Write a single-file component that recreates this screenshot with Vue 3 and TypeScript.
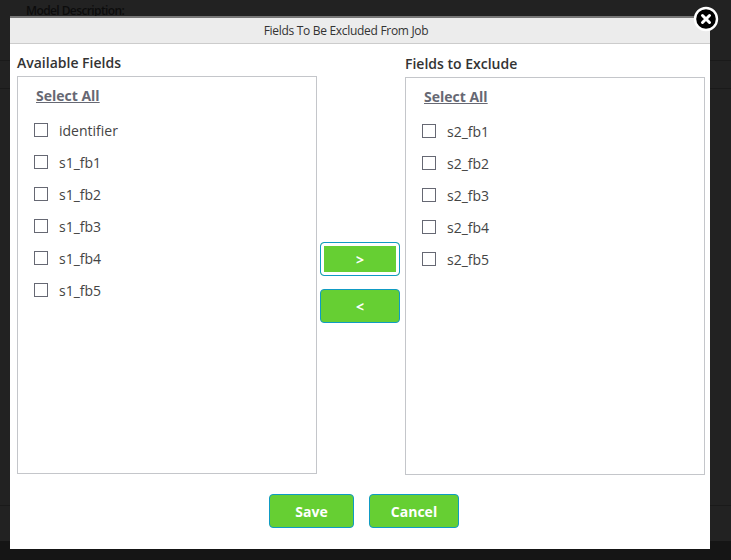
<script setup lang="ts">
const left: string[] = ['identifier', 's1_fb1', 's1_fb2', 's1_fb3', 's1_fb4', 's1_fb5']
const right: string[] = ['s2_fb1', 's2_fb2', 's2_fb3', 's2_fb4', 's2_fb5']
</script>

<template>
  <div class="page">
    <div class="backdrop">
      <div class="bg-row bg-first"><span class="bg-label">Model Description:</span></div>
      <div class="bg-row bg-second"></div>
      <div class="bg-row bg-third"></div>
      <div class="bg-fill"></div>
      <div class="bg-foot"></div>
    </div>
    <div class="modal">
      <div class="modal-head">Fields To Be Excluded From Job</div>
      <div class="columns">
        <section class="col">
          <h3 class="col-title">Available Fields</h3>
          <div class="box">
            <a class="select-all">Select All</a>
            <ul class="list">
              <li v-for="f in left" :key="f" class="item"><span class="check"></span><span>{{ f }}</span></li>
            </ul>
          </div>
        </section>
        <div class="mid">
          <button class="btn move focused">&gt;</button>
          <button class="btn move">&lt;</button>
        </div>
        <section class="col col-right">
          <h3 class="col-title">Fields to Exclude</h3>
          <div class="box">
            <a class="select-all">Select All</a>
            <ul class="list">
              <li v-for="f in right" :key="f" class="item"><span class="check"></span><span>{{ f }}</span></li>
            </ul>
          </div>
        </section>
      </div>
      <div class="actions">
        <button class="btn save">Save</button>
        <button class="btn cancel">Cancel</button>
      </div>
    </div>
    <button class="close" aria-label="Close">
      <svg width="26" height="26" viewBox="0 0 26 26">
        <circle cx="13" cy="13" r="11" fill="#000" stroke="#fff" stroke-width="2.4" />
        <path d="M9.5 9.5L16.5 16.5M16.5 9.5L9.5 16.5" stroke="#fff" stroke-width="3" stroke-linecap="round" />
      </svg>
    </button>
  </div>
</template>

<style>
html, body { margin: 0; background: #222; }
</style>

<style scoped>
.page {
  position: relative;
  width: 731px;
  height: 560px;
  overflow: hidden;
  font-family: "Open Sans", sans-serif;
}
.backdrop {
  height: 560px;
  display: flex;
  flex-direction: column;
  background: #222;
}
.bg-row { border-bottom: 1px solid #1a1a1a; box-sizing: border-box; }
.bg-first { height: 61px; padding: 3px 0 0 26px; }
.bg-second { height: 28px; }
.bg-third { height: 417px; }
.bg-fill { flex: 1; }
.bg-foot { height: 19px; background: #151515; }
.bg-label {
  display: block;
  font-size: 12px;
  font-weight: 600;
  letter-spacing: -0.6px;
  color: #0c0c0c;
  line-height: 16px;
}
.modal {
  position: absolute;
  left: 10px;
  top: 16px;
  width: 700px;
  height: 533px;
  box-sizing: border-box;
  background: #fff;
  border-top: 2px solid #777;
}
.modal-head {
  height: 26px;
  box-sizing: border-box;
  background: #ececec;
  border-bottom: 1px solid #ccc;
  color: #333;
  font-size: 12px;
  letter-spacing: -0.3px;
  line-height: 25px;
  text-align: center;
  padding-right: 28px;
}
.columns {
  display: flex;
  padding: 10px 5px 0 7px;
}
.col { width: 300px; }
.col-right { padding-top: 1px; }
.col-title {
  margin: 0;
  height: 22px;
  font-size: 14px;
  line-height: 17px;
  font-weight: 600;
  color: #333;
}
.box {
  width: 300px;
  height: 398px;
  box-sizing: border-box;
  border: 1px solid #c4c6ca;
  padding: 9px 0 0 16px;
}
.select-all {
  display: block;
  font-size: 14px;
  line-height: 19px;
  font-weight: 700;
  color: #666873;
  text-decoration: underline;
  margin-left: 2px;
}
.list { list-style: none; margin: 9px 0 0; padding: 0; }
.item {
  display: flex;
  align-items: center;
  height: 32px;
  font-size: 14px;
  color: #444;
}
.check {
  width: 14px;
  height: 14px;
  box-sizing: border-box;
  border: 1px solid #666873;
  margin-right: 11px;
  background: #fff;
}
.mid {
  width: 88px;
  box-sizing: border-box;
  display: flex;
  flex-direction: column;
  align-items: flex-start;
  gap: 13px;
  padding: 188px 0 0 3px;
}
.btn {
  box-sizing: border-box;
  border: 1px solid #0f9bc4;
  border-radius: 4px;
  background: #66cf33;
  color: #fff;
  font-family: inherit;
  font-weight: 700;
  font-size: 14px;
  padding: 0;
  height: 34px;
}
.move { width: 80px; }
.focused { box-shadow: inset 0 0 0 3px #fff; }
.actions {
  display: flex;
  justify-content: center;
  gap: 15px;
  padding: 19px 0 0 8px;
}
.save { width: 85px; }
.cancel { width: 90px; }
.close {
  position: absolute;
  left: 693px;
  top: 6px;
  width: 26px;
  height: 26px;
  padding: 0;
  border: 0;
  background: none;
}
.close svg { display: block; }
</style>
